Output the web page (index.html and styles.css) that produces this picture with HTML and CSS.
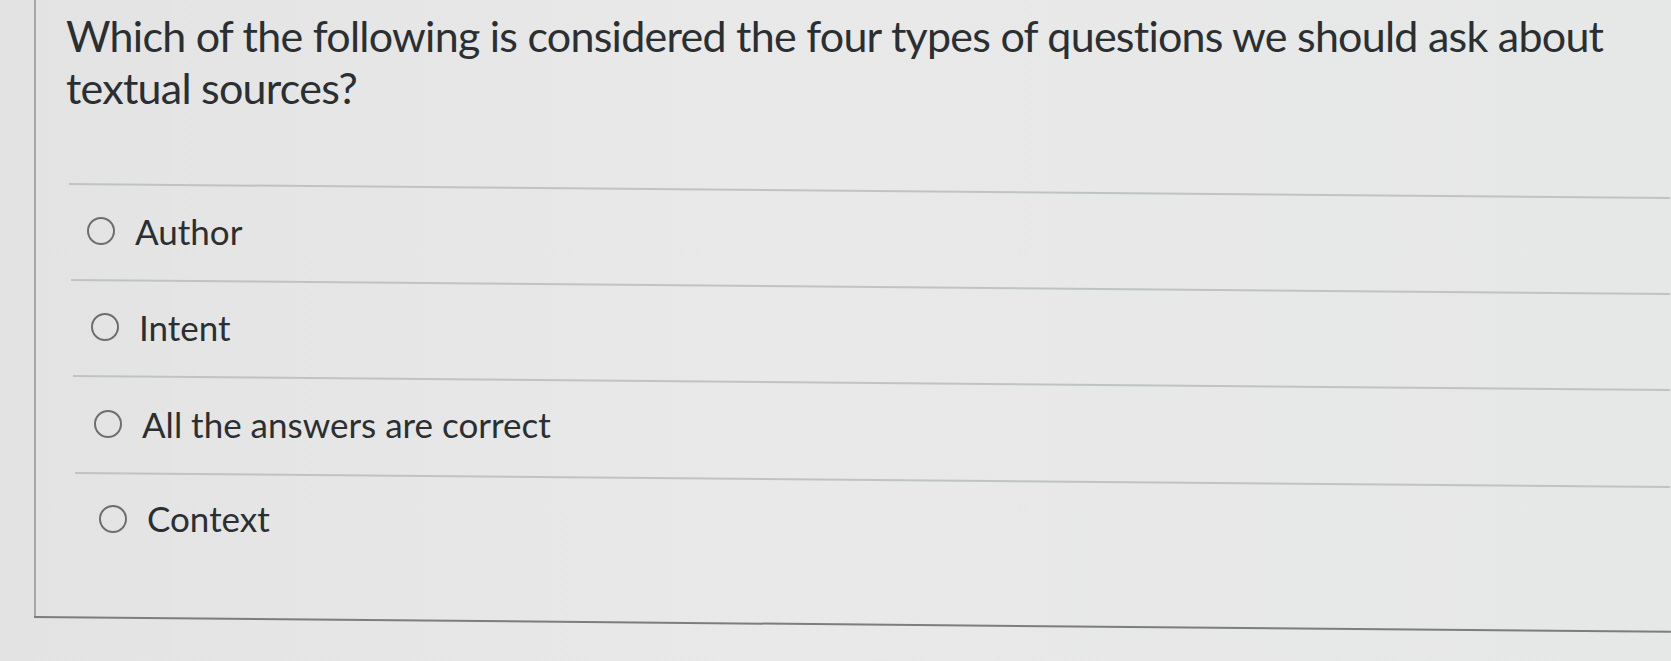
FILE: index.html
```html
<!DOCTYPE html>
<html>
<head>
<meta charset="utf-8">
<link rel="stylesheet" href="styles.css">
</head>
<body>
<div class="page">
  <div class="question">Which of the following is considered the four types of questions we should ask about textual sources?</div>
  <div class="answers">
    <label class="answer"><span class="radio"></span><span class="answer-text">Author</span></label>
    <label class="answer"><span class="radio"></span><span class="answer-text">Intent</span></label>
    <label class="answer"><span class="radio"></span><span class="answer-text">All the answers are correct</span></label>
    <label class="answer"><span class="radio"></span><span class="answer-text">Context</span></label>
  </div>
</div>
</body>
</html>
```
FILE: styles.css
```css
html, body {
  margin: 0;
  padding: 0;
  overflow: hidden;
}
body {
  background: linear-gradient(90deg, #e2e3e2 0%, #e8e9e8 45%, #e6e7e7 100%);
  font-family: Lato, "Open Sans", sans-serif;
  color: #2b2f32;
  height: 661px;
}
.page {
  position: relative;
  margin-left: 34px;
  height: 618px;
  box-sizing: border-box;
  border-left: 2px solid #a6a8a8;
  padding-top: 10px;
}
.page::after {
  content: "";
  position: absolute;
  left: -2px;
  bottom: 0;
  width: 1637px;
  height: 2px;
  background: #7b7d7e;
  transform-origin: left center;
  transform: rotate(0.52deg);
}
.question {
  font-size: 43px;
  line-height: 52px;
  letter-spacing: -0.75px;
  padding-left: 30px;
  width: 1580px;
}
.answers {
  margin-top: 69px;
  margin-left: 33px;
}
.answer {
  position: relative;
  display: flex;
  align-items: center;
  gap: 20px;
  height: 96px;
  padding-left: 18px;
  box-sizing: border-box;
}
.answer::before {
  content: "";
  position: absolute;
  left: 0;
  top: 0;
  width: 1601px;
  height: 2px;
  background: #c0c3c4;
  transform-origin: left center;
  transform: rotate(0.5deg);
}
.answer:nth-child(2) { padding-left: 22px; }
.answer:nth-child(2)::before { left: 2px; width: 1599px; }
.answer:nth-child(3) { padding-left: 25px; height: 97px; }
.answer:nth-child(3)::before { left: 4px; width: 1597px; }
.answer:nth-child(4) { padding-left: 30px; height: 84px; align-items: flex-start; padding-top: 25px; }
.answer:nth-child(4)::before { left: 6px; width: 1595px; }
.radio {
  width: 24px;
  height: 24px;
  border: 2px solid #6c6f71;
  border-radius: 50%;
  flex: none;
}
.answer:nth-child(4) .radio { margin-top: 8px; }
.answer-text {
  font-size: 35px;
  line-height: 42px;
}
```
